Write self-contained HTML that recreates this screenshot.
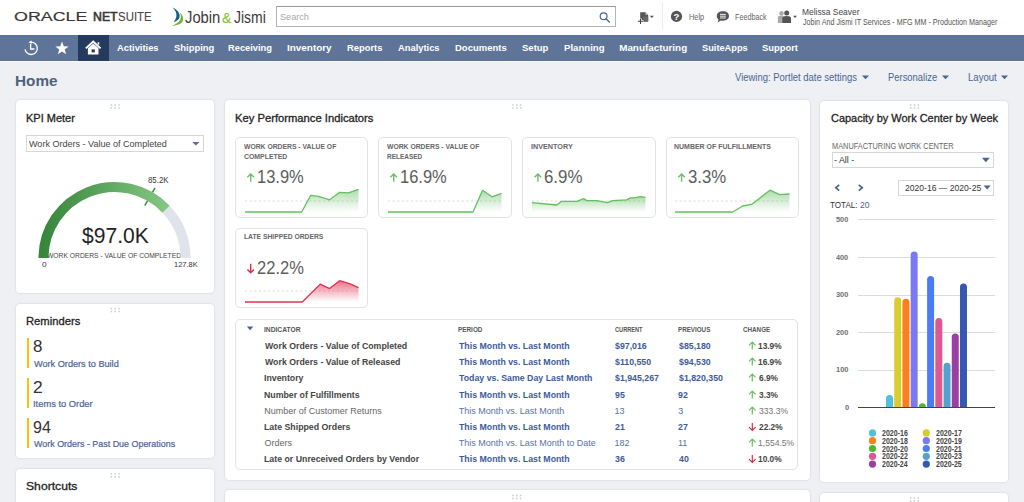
<!DOCTYPE html><html><head><meta charset="utf-8"><style>
html,body{margin:0;padding:0}
body{width:1024px;height:502px;overflow:hidden;position:relative;background:#eef0f4;font-family:"Liberation Sans",sans-serif}
.t{position:absolute;white-space:pre;transform-origin:0 0;}
.p{position:absolute;background:#fff;border-radius:4px;box-shadow:0 0 0 .5px rgba(30,40,60,.06),0 0 3px rgba(30,40,60,.08)}
svg{position:absolute;left:0;top:0}
</style></head><body>
<div style="position:absolute;left:0.00px;top:0.00px;width:1024.00px;height:35.00px;background:#fff"></div>
<div class="t" style="left:14.30px;top:10.00px;font-size:13.08px;line-height:13.08px;color:#3a3634;transform:scaleX(1.3655);-webkit-text-stroke:0.15px currentColor;">ORACLE</div>
<div class="t" style="left:92.81px;top:11.00px;font-size:12.35px;line-height:12.35px;color:#3a3634;transform:scaleX(0.9968);-webkit-text-stroke:0.6px currentColor;">NET</div>
<div class="t" style="left:117.69px;top:11.00px;font-size:12.35px;line-height:12.35px;color:#4a4644;transform:scaleX(0.9262);-webkit-text-stroke:0.1px currentColor;">SUITE</div>
<div class="t" style="left:185.08px;top:10.00px;font-size:16.57px;line-height:16.57px;color:#3a3a3a;transform:scaleX(0.8925);-webkit-text-stroke:0;">Jobin</div>
<div class="t" style="left:222.10px;top:11.00px;font-size:14.54px;line-height:14.54px;color:#7cc02e;transform:scaleX(0.9805);-webkit-text-stroke:0;">&amp;</div>
<div class="t" style="left:234.29px;top:10.00px;font-size:16.57px;line-height:16.57px;color:#3a3a3a;transform:scaleX(0.8441);-webkit-text-stroke:0;">Jismi</div>
<div style="position:absolute;left:276.00px;top:6.00px;width:340.00px;height:21.00px;box-sizing:border-box;border:1px solid #b3b3b3;border-top-color:#9a9a9a;background:#fff"></div>
<div class="t" style="left:279.59px;top:13.00px;font-size:9.01px;line-height:9.01px;color:#a9a9a9;transform:scaleX(1.0154);-webkit-text-stroke:0;">Search</div>
<div class="t" style="left:689.41px;top:14.00px;font-size:8.14px;line-height:8.14px;color:#666;transform:scaleX(0.9079);-webkit-text-stroke:0;">Help</div>
<div class="t" style="left:735.42px;top:14.00px;font-size:8.14px;line-height:8.14px;color:#666;transform:scaleX(0.8883);-webkit-text-stroke:0;">Feedback</div>
<div class="t" style="left:802.33px;top:8.00px;font-size:9.30px;line-height:9.30px;color:#444;transform:scaleX(0.9043);-webkit-text-stroke:0;">Melissa Seaver</div>
<div class="t" style="left:802.89px;top:19.00px;font-size:8.14px;line-height:8.14px;color:#555;transform:scaleX(0.8804);-webkit-text-stroke:0;">Jobin And Jismi IT Services - MFG MM - Production Manager</div>
<div style="position:absolute;left:662.00px;top:2.00px;width:1.00px;height:27.00px;background:#ececec"></div>
<div style="position:absolute;left:0.00px;top:35.00px;width:1024.00px;height:26.00px;background:#5e7498"></div>
<div style="position:absolute;left:0.00px;top:60.00px;width:1024.00px;height:1.00px;background:#5c7296"></div>
<div style="position:absolute;left:0.00px;top:61.00px;width:1024.00px;height:1.00px;background:#f7f8fa"></div>
<div style="position:absolute;left:78.00px;top:35.00px;width:30.50px;height:26.00px;background:#253a5f"></div>
<div class="t" style="left:116.77px;top:43.00px;font-size:9.88px;line-height:9.88px;color:#fff;font-weight:700;transform:scaleX(0.9465);-webkit-text-stroke:0;">Activities</div>
<div class="t" style="left:173.74px;top:43.00px;font-size:9.88px;line-height:9.88px;color:#fff;font-weight:700;transform:scaleX(0.9531);-webkit-text-stroke:0;">Shipping</div>
<div class="t" style="left:228.39px;top:43.00px;font-size:9.88px;line-height:9.88px;color:#fff;font-weight:700;transform:scaleX(0.9429);-webkit-text-stroke:0;">Receiving</div>
<div class="t" style="left:286.85px;top:43.00px;font-size:9.88px;line-height:9.88px;color:#fff;font-weight:700;transform:scaleX(1.0043);-webkit-text-stroke:0;">Inventory</div>
<div class="t" style="left:346.99px;top:43.00px;font-size:9.88px;line-height:9.88px;color:#fff;font-weight:700;transform:scaleX(0.9471);-webkit-text-stroke:0;">Reports</div>
<div class="t" style="left:398.17px;top:43.00px;font-size:9.88px;line-height:9.88px;color:#fff;font-weight:700;transform:scaleX(0.9465);-webkit-text-stroke:0;">Analytics</div>
<div class="t" style="left:454.78px;top:43.00px;font-size:9.88px;line-height:9.88px;color:#fff;font-weight:700;transform:scaleX(0.9620);-webkit-text-stroke:0;">Documents</div>
<div class="t" style="left:521.94px;top:43.00px;font-size:9.88px;line-height:9.88px;color:#fff;font-weight:700;transform:scaleX(0.9632);-webkit-text-stroke:0;">Setup</div>
<div class="t" style="left:563.57px;top:43.00px;font-size:9.88px;line-height:9.88px;color:#fff;font-weight:700;transform:scaleX(0.9740);-webkit-text-stroke:0;">Planning</div>
<div class="t" style="left:619.16px;top:43.00px;font-size:9.88px;line-height:9.88px;color:#fff;font-weight:700;-webkit-text-stroke:0;">Manufacturing</div>
<div class="t" style="left:701.55px;top:43.00px;font-size:9.88px;line-height:9.88px;color:#fff;font-weight:700;transform:scaleX(0.9371);-webkit-text-stroke:0;">SuiteApps</div>
<div class="t" style="left:762.44px;top:43.00px;font-size:9.88px;line-height:9.88px;color:#fff;font-weight:700;transform:scaleX(0.9491);-webkit-text-stroke:0;">Support</div>
<div class="t" style="left:15.21px;top:74.00px;font-size:14.54px;line-height:14.54px;color:#4e617e;font-weight:700;transform:scaleX(1.0525);-webkit-text-stroke:0;">Home</div>
<div class="t" style="left:735.38px;top:72.00px;font-size:11.05px;line-height:11.05px;color:#4d6391;transform:scaleX(0.8573);">Viewing: Portlet date settings</div>
<div class="t" style="left:887.85px;top:72.00px;font-size:11.05px;line-height:11.05px;color:#4d6391;transform:scaleX(0.8516);">Personalize</div>
<div class="t" style="left:968.03px;top:72.00px;font-size:11.05px;line-height:11.05px;color:#4d6391;transform:scaleX(0.8657);">Layout</div>
<div class="p" style="left:16px;top:100px;width:198px;height:192.5px"></div>
<div class="p" style="left:16px;top:303.5px;width:198px;height:154.5px"></div>
<div class="p" style="left:16px;top:468.6px;width:198px;height:60px"></div>
<div class="p" style="left:225px;top:100px;width:585px;height:379.5px"></div>
<div class="p" style="left:225px;top:490.3px;width:585px;height:60px"></div>
<div class="p" style="left:820px;top:100.5px;width:188px;height:381.2px"></div>
<div class="p" style="left:820px;top:493px;width:188px;height:60px"></div>
<div class="t" style="left:26.12px;top:113.00px;font-size:11.05px;line-height:11.05px;color:#222;transform:scaleX(0.9947);-webkit-text-stroke:0.3px currentColor;">KPI Meter</div>
<div style="position:absolute;left:26.20px;top:135.30px;width:177.50px;height:16.30px;box-sizing:border-box;border:1px solid #d5d7da;background:#fff"></div>
<div class="t" style="left:28.78px;top:140.00px;font-size:8.72px;line-height:8.72px;color:#444;transform:scaleX(1.0364);">Work Orders - Value of Completed</div>
<div class="t" style="left:147.57px;top:176.00px;font-size:8.72px;line-height:8.72px;color:#333;transform:scaleX(0.8994);">85.2K</div>
<div class="t" style="left:81.79px;top:226.00px;font-size:21.51px;line-height:21.51px;color:#222;transform:scaleX(0.9799);-webkit-text-stroke:0;">$97.0K</div>
<div class="t" style="left:47.48px;top:252.00px;font-size:7.85px;line-height:7.85px;color:#444;transform:scaleX(0.8575);">WORK ORDERS - VALUE OF COMPLETED</div>
<div class="t" style="left:41.69px;top:261.00px;font-size:7.27px;line-height:7.27px;color:#333;transform:scaleX(1.1466);">0</div>
<div class="t" style="left:174.14px;top:261.00px;font-size:7.56px;line-height:7.56px;color:#333;transform:scaleX(0.9864);">127.8K</div>
<div class="t" style="left:26.30px;top:316.00px;font-size:11.34px;line-height:11.34px;color:#222;transform:scaleX(0.9904);-webkit-text-stroke:0.3px currentColor;">Reminders</div>
<div style="position:absolute;left:26.60px;top:337.80px;width:2.50px;height:30.00px;background:#fcc200"></div>
<div class="t" style="left:33.08px;top:339.00px;font-size:16.86px;line-height:16.86px;color:#333;transform:scaleX(1.0042);-webkit-text-stroke:0;">8</div>
<div class="t" style="left:33.78px;top:360.00px;font-size:9.30px;line-height:9.30px;color:#4a6396;transform:scaleX(0.9841);-webkit-text-stroke:0.2px currentColor;">Work Orders to Build</div>
<div style="position:absolute;left:26.60px;top:377.90px;width:2.50px;height:30.00px;background:#fcc200"></div>
<div class="t" style="left:32.93px;top:380.00px;font-size:16.86px;line-height:16.86px;color:#333;transform:scaleX(1.0371);-webkit-text-stroke:0;">2</div>
<div class="t" style="left:32.96px;top:400.00px;font-size:9.30px;line-height:9.30px;color:#4a6396;transform:scaleX(1.0040);-webkit-text-stroke:0.2px currentColor;">Items to Order</div>
<div style="position:absolute;left:26.60px;top:418.00px;width:2.50px;height:30.00px;background:#fcc200"></div>
<div class="t" style="left:33.08px;top:420.00px;font-size:16.86px;line-height:16.86px;color:#333;transform:scaleX(0.9489);-webkit-text-stroke:0;">94</div>
<div class="t" style="left:33.78px;top:440.00px;font-size:9.30px;line-height:9.30px;color:#4a6396;transform:scaleX(0.9597);-webkit-text-stroke:0.2px currentColor;">Work Orders - Past Due Operations</div>
<div class="t" style="left:26.25px;top:480.00px;font-size:11.63px;line-height:11.63px;color:#222;transform:scaleX(1.0478);-webkit-text-stroke:0.3px currentColor;">Shortcuts</div>
<div class="t" style="left:235.10px;top:113.00px;font-size:11.19px;line-height:11.19px;color:#222;transform:scaleX(1.0028);-webkit-text-stroke:0.3px currentColor;">Key Performance Indicators</div>
<div style="position:absolute;left:235px;top:137px;width:133px;height:81px;box-sizing:border-box;border:1px solid #e2e3e6;border-radius:5px;background:#fff"></div>
<div style="position:absolute;left:378px;top:137px;width:134px;height:81px;box-sizing:border-box;border:1px solid #e2e3e6;border-radius:5px;background:#fff"></div>
<div style="position:absolute;left:522px;top:137px;width:134px;height:81px;box-sizing:border-box;border:1px solid #e2e3e6;border-radius:5px;background:#fff"></div>
<div style="position:absolute;left:666px;top:137px;width:133px;height:81px;box-sizing:border-box;border:1px solid #e2e3e6;border-radius:5px;background:#fff"></div>
<div style="position:absolute;left:235px;top:228px;width:133px;height:80px;box-sizing:border-box;border:1px solid #e2e3e6;border-radius:5px;background:#fff"></div>
<div class="t" style="left:244.00px;top:144.00px;font-size:7.12px;line-height:7.12px;color:#666;font-weight:700;transform:scaleX(0.9549);-webkit-text-stroke:0;">WORK ORDERS - VALUE OF</div>
<div class="t" style="left:243.72px;top:154.00px;font-size:7.12px;line-height:7.12px;color:#666;font-weight:700;transform:scaleX(0.9696);-webkit-text-stroke:0;">COMPLETED</div>
<div class="t" style="left:256.76px;top:168.00px;font-size:18.02px;line-height:18.02px;color:#5c5c5c;transform:scaleX(0.9154);-webkit-text-stroke:0;">13.9%</div>
<div class="t" style="left:387.00px;top:144.00px;font-size:7.12px;line-height:7.12px;color:#666;font-weight:700;transform:scaleX(0.9549);-webkit-text-stroke:0;">WORK ORDERS - VALUE OF</div>
<div class="t" style="left:386.58px;top:154.00px;font-size:7.12px;line-height:7.12px;color:#666;font-weight:700;transform:scaleX(0.9097);-webkit-text-stroke:0;">RELEASED</div>
<div class="t" style="left:399.76px;top:168.00px;font-size:18.02px;line-height:18.02px;color:#5c5c5c;transform:scaleX(0.9154);-webkit-text-stroke:0;">16.9%</div>
<div class="t" style="left:530.73px;top:144.00px;font-size:7.12px;line-height:7.12px;color:#666;font-weight:700;transform:scaleX(1.0149);-webkit-text-stroke:0;">INVENTORY</div>
<div class="t" style="left:544.36px;top:168.00px;font-size:18.02px;line-height:18.02px;color:#5c5c5c;transform:scaleX(0.9352);-webkit-text-stroke:0;">6.9%</div>
<div class="t" style="left:674.45px;top:144.00px;font-size:7.12px;line-height:7.12px;color:#666;font-weight:700;transform:scaleX(0.9809);-webkit-text-stroke:0;">NUMBER OF FULFILLMENTS</div>
<div class="t" style="left:688.27px;top:168.00px;font-size:18.02px;line-height:18.02px;color:#5c5c5c;transform:scaleX(0.9300);-webkit-text-stroke:0;">3.3%</div>
<div class="t" style="left:243.56px;top:234.00px;font-size:7.12px;line-height:7.12px;color:#666;font-weight:700;transform:scaleX(0.9489);-webkit-text-stroke:0;">LATE SHIPPED ORDERS</div>
<div class="t" style="left:257.17px;top:259.00px;font-size:18.02px;line-height:18.02px;color:#5c5c5c;transform:scaleX(0.9172);-webkit-text-stroke:0;">22.2%</div>
<div style="position:absolute;left:235px;top:319px;width:563px;height:151px;box-sizing:border-box;border:1px solid #e2e3e6;border-radius:5px;background:#fff"></div>
<div class="t" style="left:264.16px;top:326.00px;font-size:6.98px;line-height:6.98px;color:#555;font-weight:700;transform:scaleX(0.9595);-webkit-text-stroke:0;">INDICATOR</div>
<div class="t" style="left:458.19px;top:326.00px;font-size:6.98px;line-height:6.98px;color:#555;font-weight:700;transform:scaleX(0.9146);-webkit-text-stroke:0;">PERIOD</div>
<div class="t" style="left:614.77px;top:326.00px;font-size:6.98px;line-height:6.98px;color:#555;font-weight:700;transform:scaleX(0.8085);-webkit-text-stroke:0;">CURRENT</div>
<div class="t" style="left:677.99px;top:326.00px;font-size:6.98px;line-height:6.98px;color:#555;font-weight:700;transform:scaleX(0.8971);-webkit-text-stroke:0;">PREVIOUS</div>
<div class="t" style="left:742.65px;top:326.00px;font-size:6.98px;line-height:6.98px;color:#555;font-weight:700;transform:scaleX(0.9022);-webkit-text-stroke:0;">CHANGE</div>
<div class="t" style="left:264.90px;top:342.00px;font-size:9.01px;line-height:9.01px;color:#444;font-weight:700;transform:scaleX(0.9750);-webkit-text-stroke:0;">Work Orders - Value of Completed</div>
<div class="t" style="left:458.81px;top:342.00px;font-size:9.01px;line-height:9.01px;color:#3d5b98;font-weight:700;transform:scaleX(0.9750);-webkit-text-stroke:0;">This Month vs. Last Month</div>
<div class="t" style="left:615.19px;top:342.00px;font-size:9.01px;line-height:9.01px;color:#3d5b98;font-weight:700;transform:scaleX(0.9750);-webkit-text-stroke:0;">$97,016</div>
<div class="t" style="left:678.59px;top:342.00px;font-size:9.01px;line-height:9.01px;color:#3d5b98;font-weight:700;transform:scaleX(0.9750);-webkit-text-stroke:0;">$85,180</div>
<div class="t" style="left:758.48px;top:342.00px;font-size:9.01px;line-height:9.01px;color:#444;font-weight:700;transform:scaleX(0.9262);-webkit-text-stroke:0;">13.9%</div>
<div class="t" style="left:264.90px;top:358.00px;font-size:9.01px;line-height:9.01px;color:#444;font-weight:700;transform:scaleX(0.9750);-webkit-text-stroke:0;">Work Orders - Value of Released</div>
<div class="t" style="left:458.81px;top:358.00px;font-size:9.01px;line-height:9.01px;color:#3d5b98;font-weight:700;transform:scaleX(0.9750);-webkit-text-stroke:0;">This Month vs. Last Month</div>
<div class="t" style="left:615.19px;top:358.00px;font-size:9.01px;line-height:9.01px;color:#3d5b98;font-weight:700;transform:scaleX(0.9750);-webkit-text-stroke:0;">$110,550</div>
<div class="t" style="left:678.59px;top:358.00px;font-size:9.01px;line-height:9.01px;color:#3d5b98;font-weight:700;transform:scaleX(0.9750);-webkit-text-stroke:0;">$94,530</div>
<div class="t" style="left:758.48px;top:358.00px;font-size:9.01px;line-height:9.01px;color:#444;font-weight:700;transform:scaleX(0.9262);-webkit-text-stroke:0;">16.9%</div>
<div class="t" style="left:264.33px;top:374.00px;font-size:9.01px;line-height:9.01px;color:#444;font-weight:700;transform:scaleX(0.9750);-webkit-text-stroke:0;">Inventory</div>
<div class="t" style="left:458.81px;top:374.00px;font-size:9.01px;line-height:9.01px;color:#3d5b98;font-weight:700;transform:scaleX(0.9750);-webkit-text-stroke:0;">Today vs. Same Day Last Month</div>
<div class="t" style="left:615.19px;top:374.00px;font-size:9.01px;line-height:9.01px;color:#3d5b98;font-weight:700;transform:scaleX(0.9750);-webkit-text-stroke:0;">$1,945,267</div>
<div class="t" style="left:678.59px;top:374.00px;font-size:9.01px;line-height:9.01px;color:#3d5b98;font-weight:700;transform:scaleX(0.9750);-webkit-text-stroke:0;">$1,820,350</div>
<div class="t" style="left:758.71px;top:374.00px;font-size:9.01px;line-height:9.01px;color:#444;font-weight:700;transform:scaleX(0.9262);-webkit-text-stroke:0;">6.9%</div>
<div class="t" style="left:264.33px;top:391.00px;font-size:9.01px;line-height:9.01px;color:#444;font-weight:700;transform:scaleX(0.9750);-webkit-text-stroke:0;">Number of Fulfillments</div>
<div class="t" style="left:458.81px;top:391.00px;font-size:9.01px;line-height:9.01px;color:#3d5b98;font-weight:700;transform:scaleX(0.9750);-webkit-text-stroke:0;">This Month vs. Last Month</div>
<div class="t" style="left:615.01px;top:391.00px;font-size:9.01px;line-height:9.01px;color:#3d5b98;font-weight:700;transform:scaleX(0.9750);-webkit-text-stroke:0;">95</div>
<div class="t" style="left:678.41px;top:391.00px;font-size:9.01px;line-height:9.01px;color:#3d5b98;font-weight:700;transform:scaleX(0.9750);-webkit-text-stroke:0;">92</div>
<div class="t" style="left:758.81px;top:391.00px;font-size:9.01px;line-height:9.01px;color:#444;font-weight:700;transform:scaleX(0.9262);-webkit-text-stroke:0;">3.3%</div>
<div class="t" style="left:264.18px;top:407.00px;font-size:9.01px;line-height:9.01px;color:#666;">Number of Customer Returns</div>
<div class="t" style="left:458.72px;top:407.00px;font-size:9.01px;line-height:9.01px;color:#5872a8;">This Month vs. Last Month</div>
<div class="t" style="left:614.62px;top:407.00px;font-size:9.01px;line-height:9.01px;color:#5872a8;">13</div>
<div class="t" style="left:678.36px;top:407.00px;font-size:9.01px;line-height:9.01px;color:#5872a8;">3</div>
<div class="t" style="left:758.68px;top:407.00px;font-size:9.01px;line-height:9.01px;color:#777;transform:scaleX(0.9500);">333.3%</div>
<div class="t" style="left:264.33px;top:423.00px;font-size:9.01px;line-height:9.01px;color:#444;font-weight:700;transform:scaleX(0.9750);-webkit-text-stroke:0;">Late Shipped Orders</div>
<div class="t" style="left:458.81px;top:423.00px;font-size:9.01px;line-height:9.01px;color:#3d5b98;font-weight:700;transform:scaleX(0.9750);-webkit-text-stroke:0;">This Month vs. Last Month</div>
<div class="t" style="left:615.01px;top:423.00px;font-size:9.01px;line-height:9.01px;color:#3d5b98;font-weight:700;transform:scaleX(0.9750);-webkit-text-stroke:0;">21</div>
<div class="t" style="left:678.41px;top:423.00px;font-size:9.01px;line-height:9.01px;color:#3d5b98;font-weight:700;transform:scaleX(0.9750);-webkit-text-stroke:0;">27</div>
<div class="t" style="left:758.73px;top:423.00px;font-size:9.01px;line-height:9.01px;color:#444;font-weight:700;transform:scaleX(0.9262);-webkit-text-stroke:0;">22.2%</div>
<div class="t" style="left:264.49px;top:439.00px;font-size:9.01px;line-height:9.01px;color:#666;">Orders</div>
<div class="t" style="left:458.72px;top:439.00px;font-size:9.01px;line-height:9.01px;color:#5872a8;">This Month vs. Last Month to Date</div>
<div class="t" style="left:614.62px;top:439.00px;font-size:9.01px;line-height:9.01px;color:#5872a8;">182</div>
<div class="t" style="left:678.02px;top:439.00px;font-size:9.01px;line-height:9.01px;color:#5872a8;">11</div>
<div class="t" style="left:758.36px;top:439.00px;font-size:9.01px;line-height:9.01px;color:#777;transform:scaleX(0.9500);">1,554.5%</div>
<div class="t" style="left:264.33px;top:455.00px;font-size:9.01px;line-height:9.01px;color:#444;font-weight:700;transform:scaleX(0.9750);-webkit-text-stroke:0;">Late or Unreceived Orders by Vendor</div>
<div class="t" style="left:458.81px;top:455.00px;font-size:9.01px;line-height:9.01px;color:#3d5b98;font-weight:700;transform:scaleX(0.9750);-webkit-text-stroke:0;">This Month vs. Last Month</div>
<div class="t" style="left:615.10px;top:455.00px;font-size:9.01px;line-height:9.01px;color:#3d5b98;font-weight:700;transform:scaleX(0.9750);-webkit-text-stroke:0;">36</div>
<div class="t" style="left:678.57px;top:455.00px;font-size:9.01px;line-height:9.01px;color:#3d5b98;font-weight:700;transform:scaleX(0.9750);-webkit-text-stroke:0;">40</div>
<div class="t" style="left:758.48px;top:455.00px;font-size:9.01px;line-height:9.01px;color:#444;font-weight:700;transform:scaleX(0.9262);-webkit-text-stroke:0;">10.0%</div>
<div class="t" style="left:830.75px;top:113.00px;font-size:11.34px;line-height:11.34px;color:#222;transform:scaleX(0.9668);-webkit-text-stroke:0.3px currentColor;">Capacity by Work Center by Week</div>
<div class="t" style="left:831.81px;top:142.00px;font-size:8.43px;line-height:8.43px;color:#666;transform:scaleX(0.8751);">MANUFACTURING WORK CENTER</div>
<div style="position:absolute;left:831.70px;top:151.80px;width:162.00px;height:16.00px;box-sizing:border-box;border:1px solid #d5d7da;background:#fff"></div>
<div class="t" style="left:834.02px;top:156.00px;font-size:8.72px;line-height:8.72px;color:#333;transform:scaleX(1.0198);">- All -</div>
<div style="position:absolute;left:897.70px;top:179.70px;width:96.00px;height:16.30px;box-sizing:border-box;border:1px solid #d5d7da;background:#fff"></div>
<div class="t" style="left:904.57px;top:184.00px;font-size:9.01px;line-height:9.01px;color:#333;transform:scaleX(0.9515);">2020-16 — 2020-25</div>
<div class="t" style="left:830.24px;top:201.00px;font-size:8.72px;line-height:8.72px;color:#333;transform:scaleX(0.9250);">TOTAL:</div>
<div class="t" style="left:860.17px;top:201.00px;font-size:8.72px;line-height:8.72px;color:#4a6396;transform:scaleX(0.9756);">20</div>
<div class="t" style="left:836.38px;top:216.00px;font-size:7.56px;line-height:7.56px;color:#555;font-weight:700;transform:scaleX(0.9758);-webkit-text-stroke:0;opacity:.85;">500</div>
<div class="t" style="left:836.49px;top:254.00px;font-size:7.56px;line-height:7.56px;color:#555;font-weight:700;transform:scaleX(0.9667);-webkit-text-stroke:0;opacity:.85;">400</div>
<div class="t" style="left:836.43px;top:291.00px;font-size:7.56px;line-height:7.56px;color:#555;font-weight:700;transform:scaleX(0.9712);-webkit-text-stroke:0;opacity:.85;">300</div>
<div class="t" style="left:836.36px;top:329.00px;font-size:7.56px;line-height:7.56px;color:#555;font-weight:700;transform:scaleX(0.9773);-webkit-text-stroke:0;opacity:.85;">200</div>
<div class="t" style="left:836.13px;top:366.00px;font-size:7.56px;line-height:7.56px;color:#555;font-weight:700;transform:scaleX(0.9960);-webkit-text-stroke:0;opacity:.85;">100</div>
<div class="t" style="left:844.52px;top:404.00px;font-size:7.56px;line-height:7.56px;color:#555;font-weight:700;transform:scaleX(0.9923);-webkit-text-stroke:0;opacity:.85;">0</div>
<div class="t" style="left:882.37px;top:429.00px;font-size:8.43px;line-height:8.43px;color:#444;font-weight:700;transform:scaleX(0.8358);-webkit-text-stroke:0;">2020-16</div>
<div class="t" style="left:936.47px;top:429.00px;font-size:8.43px;line-height:8.43px;color:#444;font-weight:700;transform:scaleX(0.8381);-webkit-text-stroke:0;">2020-17</div>
<div class="t" style="left:882.37px;top:437.00px;font-size:8.43px;line-height:8.43px;color:#444;font-weight:700;transform:scaleX(0.8346);-webkit-text-stroke:0;">2020-18</div>
<div class="t" style="left:936.47px;top:437.00px;font-size:8.43px;line-height:8.43px;color:#444;font-weight:700;transform:scaleX(0.8363);-webkit-text-stroke:0;">2020-19</div>
<div class="t" style="left:882.37px;top:445.00px;font-size:8.43px;line-height:8.43px;color:#444;font-weight:700;transform:scaleX(0.8369);-webkit-text-stroke:0;">2020-20</div>
<div class="t" style="left:936.47px;top:445.00px;font-size:8.43px;line-height:8.43px;color:#444;font-weight:700;transform:scaleX(0.8340);-webkit-text-stroke:0;">2020-21</div>
<div class="t" style="left:882.37px;top:452.00px;font-size:8.43px;line-height:8.43px;color:#444;font-weight:700;transform:scaleX(0.8369);-webkit-text-stroke:0;">2020-22</div>
<div class="t" style="left:936.47px;top:452.00px;font-size:8.43px;line-height:8.43px;color:#444;font-weight:700;transform:scaleX(0.8358);-webkit-text-stroke:0;">2020-23</div>
<div class="t" style="left:882.37px;top:460.00px;font-size:8.43px;line-height:8.43px;color:#444;font-weight:700;transform:scaleX(0.8289);-webkit-text-stroke:0;">2020-24</div>
<div class="t" style="left:936.47px;top:460.00px;font-size:8.43px;line-height:8.43px;color:#444;font-weight:700;transform:scaleX(0.8340);-webkit-text-stroke:0;">2020-25</div>
<svg width="1024" height="502" viewBox="0 0 1024 502">
<defs>
<linearGradient id="gg" x1="0" y1="0" x2="1" y2="0"><stop offset="0" stop-color="#37863b"/><stop offset="1" stop-color="#84c683"/></linearGradient>
<linearGradient id="fg" x1="0" y1="0" x2="0" y2="1"><stop offset="0" stop-color="#5cb85c" stop-opacity=".5"/><stop offset="1" stop-color="#5cb85c" stop-opacity="0"/></linearGradient>
<linearGradient id="fr" x1="0" y1="0" x2="0" y2="1"><stop offset="0" stop-color="#e0284a" stop-opacity=".65"/><stop offset="1" stop-color="#e0284a" stop-opacity="0"/></linearGradient>
</defs>
<path d="M172.3,7.6 C177.5,9.5 180.2,13.5 179.6,17 C179.2,19.4 177,21 173.6,22 C175.8,19.5 176.7,17 176.4,14.6 C176.1,12 174.8,9.6 172.3,7.6Z" fill="#1d5f80"/>
<path d="M179.6,12.4 C182.6,14.6 183.6,17.6 182.9,20.3 C182,23.6 177.8,25.6 171.8,25.9 C176.2,24.3 179.3,22 180.4,19.2 C181.2,17 180.8,14.6 179.6,12.4Z" fill="#6db52c"/>
<circle cx="603.6" cy="16.2" r="3.4" fill="none" stroke="#4a6396" stroke-width="1.2"/><path d="M606,18.8 L609.3,22" stroke="#4a6396" stroke-width="1.4" stroke-linecap="round"/>
<path d="M640.2,12.3 H645.4 L648.2,15.1 V21.6 H640.2Z" fill="#555"/><path d="M645.4,12.3 V15.1 H648.2Z" fill="#bbb"/><path d="M643.2,16.5 V21.6 H648.2 V16.5Z" fill="#666"/>
<path d="M637.6,21.3 H643.4 M640.5,18.4 V24.2" stroke="#fff" stroke-width="2.6"/><path d="M637.9,21.3 H643.1 M640.5,18.7 V23.9" stroke="#444" stroke-width="1.1"/>
<path d="M649.8,15.7 H653.9 L651.85,18.1Z" fill="#555"/>
<circle cx="676.5" cy="16.4" r="5.6" fill="#555"/><text x="676.5" y="19.6" font-family="Liberation Sans" font-weight="700" font-size="9.6" fill="#fff" text-anchor="middle">?</text>
<path d="M722.9,11.3 C726.6,11.3 729,13.3 729,16 C729,18.7 726.6,20.7 722.9,20.7 C722.1,20.7 721.4,20.6 720.7,20.4 L717.6,22.5 L718.5,19.4 C717.3,18.6 716.8,17.4 716.8,16 C716.8,13.3 719.2,11.3 722.9,11.3Z" fill="#555"/><path d="M720,14.4 H725.8 M720,16.2 H725.8 M720,18 H725.8" stroke="#fff" stroke-width=".9"/>
<circle cx="781.5" cy="13.3" r="2.2" fill="#aaa"/><path d="M777.9,23 V17.5 C777.9,16.3 779,15.6 781.5,15.6 C782.5,15.6 783,15.7 783.5,15.9 V23Z" fill="#aaa"/>
<circle cx="786.7" cy="13.1" r="2.5" fill="#555"/><path d="M782.3,23 V18 C782.3,16.6 783.8,15.9 786.7,15.9 C789.6,15.9 791,16.6 791,18 V23Z" fill="#555"/>
<path d="M793,15.7 H797 L795,18.1Z" fill="#555"/>
<path d="M30.6,42.1 A6.2,6.2 0 1 1 25,49.4" fill="none" stroke="#fff" stroke-width="1.3"/><path d="M28.6,42.2 L31.6,40.4 L31.6,44Z" fill="#fff"/><path d="M30.6,44 V49 H34.5" fill="none" stroke="#fff" stroke-width="1.3"/>
<polygon points="62.00,41.60 63.70,46.25 68.66,46.44 64.76,49.50 66.11,54.26 62.00,51.50 57.89,54.26 59.24,49.50 55.34,46.44 60.30,46.25" fill="#fff"/>
<path d="M85.8,48.4 L93.2,41.6 L100.6,48.4" fill="none" stroke="#fff" stroke-width="1.9" stroke-linejoin="miter"/><path d="M97.6,42.2 H99.2 V45.2 L97.6,43.8Z" fill="#fff"/><path d="M87.9,48.2 L93.2,43.4 L98.5,48.2 V54.5 H87.9Z" fill="#fff"/><rect x="91.6" y="49.4" width="3.2" height="3" fill="#253a5f"/>
<path d="M862.0,75.6 H869.0 L865.5,79.2Z" fill="#4d6391"/>
<path d="M942.0,75.6 H949.0 L945.5,79.2Z" fill="#4d6391"/>
<path d="M1001.0,75.6 H1008.0 L1004.5,79.2Z" fill="#4d6391"/>
<rect x="110.60" y="104.25" width="1.5" height="1.5" fill="#c9cbcf"/>
<rect x="110.60" y="107.25" width="1.5" height="1.5" fill="#c9cbcf"/>
<rect x="114.45" y="104.25" width="1.5" height="1.5" fill="#c9cbcf"/>
<rect x="114.45" y="107.25" width="1.5" height="1.5" fill="#c9cbcf"/>
<rect x="118.30" y="104.25" width="1.5" height="1.5" fill="#c9cbcf"/>
<rect x="118.30" y="107.25" width="1.5" height="1.5" fill="#c9cbcf"/>
<rect x="110.60" y="307.75" width="1.5" height="1.5" fill="#c9cbcf"/>
<rect x="110.60" y="310.75" width="1.5" height="1.5" fill="#c9cbcf"/>
<rect x="114.45" y="307.75" width="1.5" height="1.5" fill="#c9cbcf"/>
<rect x="114.45" y="310.75" width="1.5" height="1.5" fill="#c9cbcf"/>
<rect x="118.30" y="307.75" width="1.5" height="1.5" fill="#c9cbcf"/>
<rect x="118.30" y="310.75" width="1.5" height="1.5" fill="#c9cbcf"/>
<rect x="110.60" y="473.05" width="1.5" height="1.5" fill="#c9cbcf"/>
<rect x="110.60" y="476.05" width="1.5" height="1.5" fill="#c9cbcf"/>
<rect x="114.45" y="473.05" width="1.5" height="1.5" fill="#c9cbcf"/>
<rect x="114.45" y="476.05" width="1.5" height="1.5" fill="#c9cbcf"/>
<rect x="118.30" y="473.05" width="1.5" height="1.5" fill="#c9cbcf"/>
<rect x="118.30" y="476.05" width="1.5" height="1.5" fill="#c9cbcf"/>
<rect x="512.20" y="104.25" width="1.5" height="1.5" fill="#c9cbcf"/>
<rect x="512.20" y="107.25" width="1.5" height="1.5" fill="#c9cbcf"/>
<rect x="516.05" y="104.25" width="1.5" height="1.5" fill="#c9cbcf"/>
<rect x="516.05" y="107.25" width="1.5" height="1.5" fill="#c9cbcf"/>
<rect x="519.90" y="104.25" width="1.5" height="1.5" fill="#c9cbcf"/>
<rect x="519.90" y="107.25" width="1.5" height="1.5" fill="#c9cbcf"/>
<rect x="512.20" y="494.75" width="1.5" height="1.5" fill="#c9cbcf"/>
<rect x="512.20" y="497.75" width="1.5" height="1.5" fill="#c9cbcf"/>
<rect x="516.05" y="494.75" width="1.5" height="1.5" fill="#c9cbcf"/>
<rect x="516.05" y="497.75" width="1.5" height="1.5" fill="#c9cbcf"/>
<rect x="519.90" y="494.75" width="1.5" height="1.5" fill="#c9cbcf"/>
<rect x="519.90" y="497.75" width="1.5" height="1.5" fill="#c9cbcf"/>
<rect x="909.90" y="104.25" width="1.5" height="1.5" fill="#c9cbcf"/>
<rect x="909.90" y="107.25" width="1.5" height="1.5" fill="#c9cbcf"/>
<rect x="913.75" y="104.25" width="1.5" height="1.5" fill="#c9cbcf"/>
<rect x="913.75" y="107.25" width="1.5" height="1.5" fill="#c9cbcf"/>
<rect x="917.60" y="104.25" width="1.5" height="1.5" fill="#c9cbcf"/>
<rect x="917.60" y="107.25" width="1.5" height="1.5" fill="#c9cbcf"/>
<rect x="909.90" y="497.25" width="1.5" height="1.5" fill="#c9cbcf"/>
<rect x="909.90" y="500.25" width="1.5" height="1.5" fill="#c9cbcf"/>
<rect x="913.75" y="497.25" width="1.5" height="1.5" fill="#c9cbcf"/>
<rect x="913.75" y="500.25" width="1.5" height="1.5" fill="#c9cbcf"/>
<rect x="917.60" y="497.25" width="1.5" height="1.5" fill="#c9cbcf"/>
<rect x="917.60" y="500.25" width="1.5" height="1.5" fill="#c9cbcf"/>
<path d="M192.2,141.9 H199.5 L195.85,145.6Z" fill="#5a6f94"/>
<path d="M144.75,205.61 L155.00,187.85" stroke="#3f8e40" stroke-width="1.5"/>
<path d="M166.09,209.22 A71,71 0 0 1 185.50,258.00" fill="none" stroke="#dee3ec" stroke-width="10"/>
<path d="M43.50,258.00 A71,71 0 0 1 166.09,209.22" fill="none" stroke="url(#gg)" stroke-width="10"/>
<path d="M245.0,201.0 H358.5" stroke="#dcdcdc" stroke-width="1" stroke-dasharray="2.2,2.4"/>
<polygon points="245.0,212.0 301.7,212.0 310.7,195.3 318.6,196.3 329.6,199.8 339.6,192.3 348.5,192.8 358.5,189.3 358.5,212.0 245.0,212.0" fill="url(#fg)"/>
<polyline points="245.0,212.0 301.7,212.0 310.7,195.3 318.6,196.3 329.6,199.8 339.6,192.3 348.5,192.8 358.5,189.3" fill="none" stroke="#63c05c" stroke-width="1.3" stroke-linejoin="round"/>
<path d="M388.0,201.0 H501.5" stroke="#dcdcdc" stroke-width="1" stroke-dasharray="2.2,2.4"/>
<polygon points="388.0,212.0 473.0,212.0 482.6,190.3 492.0,196.8 501.5,193.3 501.5,212.0 388.0,212.0" fill="url(#fg)"/>
<polyline points="388.0,212.0 473.0,212.0 482.6,190.3 492.0,196.8 501.5,193.3" fill="none" stroke="#63c05c" stroke-width="1.3" stroke-linejoin="round"/>
<path d="M532.0,201.0 H645.5" stroke="#dcdcdc" stroke-width="1" stroke-dasharray="2.2,2.4"/>
<polygon points="532.0,202.6 556.8,205.0 561.2,201.4 576.8,201.4 583.7,198.6 586.7,200.6 596.7,200.6 607.6,202.6 612.6,200.6 626.6,199.8 630.6,197.8 634.5,197.8 640.5,196.6 645.5,197.4 645.5,212.0 532.0,212.0" fill="url(#fg)"/>
<polyline points="532.0,202.6 556.8,205.0 561.2,201.4 576.8,201.4 583.7,198.6 586.7,200.6 596.7,200.6 607.6,202.6 612.6,200.6 626.6,199.8 630.6,197.8 634.5,197.8 640.5,196.6 645.5,197.4" fill="none" stroke="#63c05c" stroke-width="1.3" stroke-linejoin="round"/>
<path d="M675.0,201.0 H789.5" stroke="#dcdcdc" stroke-width="1" stroke-dasharray="2.2,2.4"/>
<polygon points="675.0,212.0 732.7,212.0 742.7,206.0 751.6,204.4 770.2,190.1 779.5,194.6 789.5,194.0 789.5,212.0 675.0,212.0" fill="url(#fg)"/>
<polyline points="675.0,212.0 732.7,212.0 742.7,206.0 751.6,204.4 770.2,190.1 779.5,194.6 789.5,194.0" fill="none" stroke="#63c05c" stroke-width="1.3" stroke-linejoin="round"/>
<path d="M245.0,291.0 H358.5" stroke="#dcdcdc" stroke-width="1" stroke-dasharray="2.2,2.4"/>
<polygon points="245.0,302.0 302.3,302.0 320.2,284.1 329.6,288.6 339.6,280.7 349.5,283.7 358.5,287.6 358.5,302.0 245.0,302.0" fill="url(#fr)"/>
<polyline points="245.0,302.0 302.3,302.0 320.2,284.1 329.6,288.6 339.6,280.7 349.5,283.7 358.5,287.6" fill="none" stroke="#e3304f" stroke-width="1.3" stroke-linejoin="round"/>
<path d="M250.7,181.8 V174.0 M247.4,177.3 L250.7,174.0 L254.0,177.3" fill="none" stroke="#6abf62" stroke-width="1.4" stroke-linejoin="miter"/>
<path d="M393.7,181.8 V174.0 M390.4,177.3 L393.7,174.0 L397.0,177.3" fill="none" stroke="#6abf62" stroke-width="1.4" stroke-linejoin="miter"/>
<path d="M537.9,181.8 V174.0 M534.6,177.3 L537.9,174.0 L541.2,177.3" fill="none" stroke="#6abf62" stroke-width="1.4" stroke-linejoin="miter"/>
<path d="M681.6,181.8 V174.0 M678.3,177.3 L681.6,174.0 L684.9,177.3" fill="none" stroke="#6abf62" stroke-width="1.4" stroke-linejoin="miter"/>
<path d="M250.7,263.8 V272.8 M247.4,269.5 L250.7,272.8 L254.0,269.5" fill="none" stroke="#e0284a" stroke-width="1.4" stroke-linejoin="miter"/>
<path d="M246.9,326.6 H253.3 L250.1,330.3Z" fill="#4a6396"/>
<path d="M752.3,349.5 V342.0 M749.0,345.3 L752.3,342.0 L755.6,345.3" fill="none" stroke="#6abf62" stroke-width="1.2" stroke-linejoin="miter"/>
<path d="M752.3,365.5 V358.0 M749.0,361.3 L752.3,358.0 L755.6,361.3" fill="none" stroke="#6abf62" stroke-width="1.2" stroke-linejoin="miter"/>
<path d="M752.3,381.5 V374.0 M749.0,377.3 L752.3,374.0 L755.6,377.3" fill="none" stroke="#6abf62" stroke-width="1.2" stroke-linejoin="miter"/>
<path d="M752.3,398.5 V391.0 M749.0,394.3 L752.3,391.0 L755.6,394.3" fill="none" stroke="#6abf62" stroke-width="1.2" stroke-linejoin="miter"/>
<path d="M752.3,414.5 V407.0 M749.0,410.3 L752.3,407.0 L755.6,410.3" fill="none" stroke="#6abf62" stroke-width="1.2" stroke-linejoin="miter"/>
<path d="M752.3,423.0 V430.5 M749.0,427.2 L752.3,430.5 L755.6,427.2" fill="none" stroke="#e0284a" stroke-width="1.2" stroke-linejoin="miter"/>
<path d="M752.3,446.5 V439.0 M749.0,442.3 L752.3,439.0 L755.6,442.3" fill="none" stroke="#6abf62" stroke-width="1.2" stroke-linejoin="miter"/>
<path d="M752.3,455.0 V462.5 M749.0,459.2 L752.3,462.5 L755.6,459.2" fill="none" stroke="#e0284a" stroke-width="1.2" stroke-linejoin="miter"/>
<path d="M839.2,184.9 L835.8,187.8 L839.2,190.7" fill="none" stroke="#4a6396" stroke-width="1.7"/>
<path d="M858.8,184.9 L862.2,187.8 L858.8,190.7" fill="none" stroke="#4a6396" stroke-width="1.7"/>
<path d="M981.9,157.8 H989.8 L985.85,162.2Z" fill="#4a6396"/>
<path d="M983.6,185.6 H990.6 L987.1,189.6Z" fill="#4a6396"/>
<path d="M858,370.5 H995" stroke="#dcdcdc" stroke-width="1"/>
<path d="M858,332.5 H995" stroke="#dcdcdc" stroke-width="1"/>
<path d="M858,295.5 H995" stroke="#dcdcdc" stroke-width="1"/>
<path d="M858,257.5 H995" stroke="#dcdcdc" stroke-width="1"/>
<path d="M858,219.5 H995" stroke="#dcdcdc" stroke-width="1"/>
<path d="M886.00,408 V398.59 A3.5,3.5 0 0 1 893.00,398.59 V408Z" fill="#4fc1db"/>
<path d="M894.22,408 V300.83 A3.5,3.5 0 0 1 901.22,300.83 V408Z" fill="#dccb2c"/>
<path d="M902.44,408 V302.34 A3.5,3.5 0 0 1 909.44,302.34 V408Z" fill="#fb7f1a"/>
<path d="M910.66,408 V254.96 A3.5,3.5 0 0 1 917.66,254.96 V408Z" fill="#7a78f2"/>
<path d="M918.88,408 V406.86 A3.5,3.5 0 0 1 925.88,406.86 V408Z" fill="#4cb82d"/>
<path d="M927.10,408 V279.40 A3.5,3.5 0 0 1 934.10,279.40 V408Z" fill="#4a7cf7"/>
<path d="M935.32,408 V321.51 A3.5,3.5 0 0 1 942.32,321.51 V408Z" fill="#dc5891"/>
<path d="M943.54,408 V366.26 A3.5,3.5 0 0 1 950.54,366.26 V408Z" fill="#50a3cb"/>
<path d="M951.76,408 V336.93 A3.5,3.5 0 0 1 958.76,336.93 V408Z" fill="#9a3fa3"/>
<path d="M959.98,408 V286.92 A3.5,3.5 0 0 1 966.98,286.92 V408Z" fill="#3558b0"/>
<path d="M858,407.5 H995" stroke="#444" stroke-width="1"/>
<circle cx="872.5" cy="432.9" r="3.6" fill="#4fc1db"/>
<circle cx="926.3" cy="432.9" r="3.6" fill="#dccb2c"/>
<circle cx="872.5" cy="440.7" r="3.6" fill="#fb7f1a"/>
<circle cx="926.3" cy="440.7" r="3.6" fill="#7a78f2"/>
<circle cx="872.5" cy="448.5" r="3.6" fill="#4cb82d"/>
<circle cx="926.3" cy="448.5" r="3.6" fill="#4a7cf7"/>
<circle cx="872.5" cy="456.3" r="3.6" fill="#dc5891"/>
<circle cx="926.3" cy="456.3" r="3.6" fill="#50a3cb"/>
<circle cx="872.5" cy="464.1" r="3.6" fill="#9a3fa3"/>
<circle cx="926.3" cy="464.1" r="3.6" fill="#3558b0"/>
</svg>
</body></html>
